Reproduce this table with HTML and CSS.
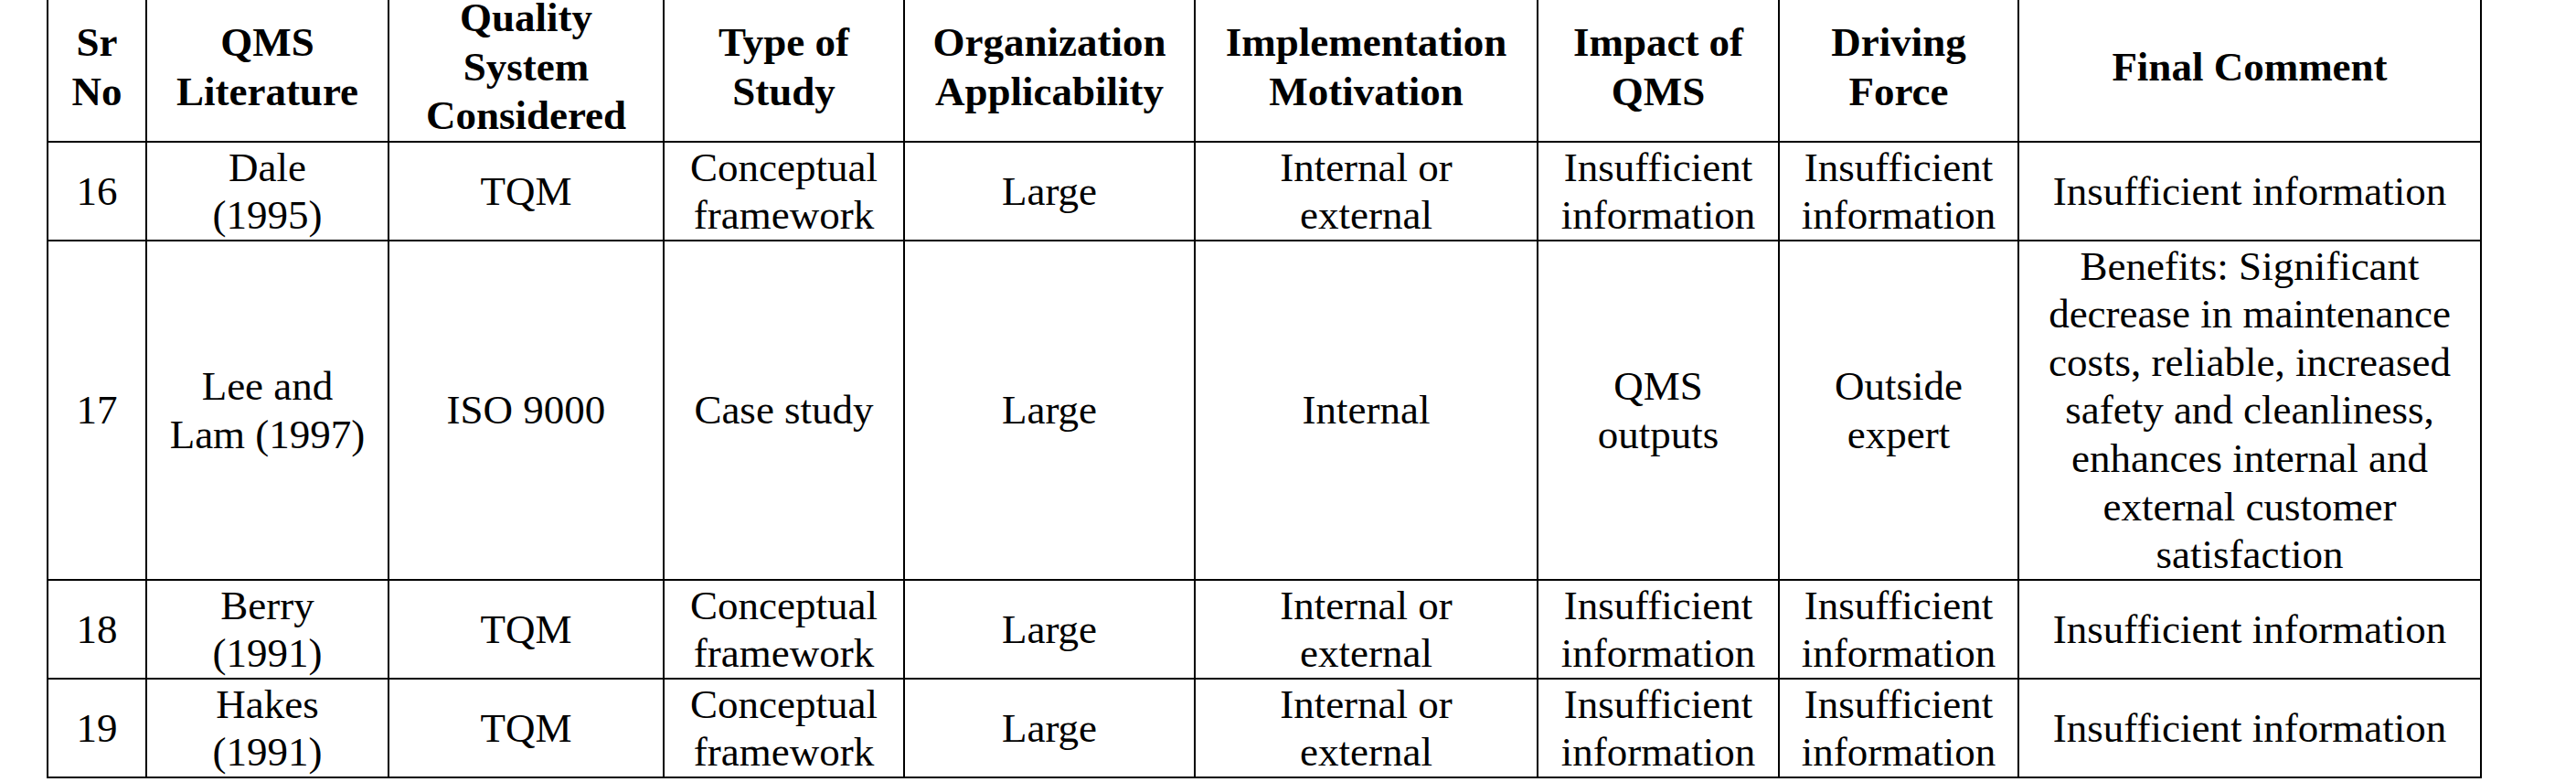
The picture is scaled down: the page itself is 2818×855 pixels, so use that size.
FILE: index.html
```html
<!DOCTYPE html>
<html>
<head>
<meta charset="utf-8">
<link rel="stylesheet" href="styles.css">
</head>
<body>
<table class="qms">
  <colgroup>
    <col class="c-sr"><col class="c-lit"><col class="c-qs"><col class="c-type"><col class="c-org"><col class="c-mot"><col class="c-imp"><col class="c-drv"><col class="c-fin">
  </colgroup>
  <thead>
    <tr>
      <th>Sr<br>No</th>
      <th>QMS<br>Literature</th>
      <th>Quality<br>System<br>Considered</th>
      <th>Type of<br>Study</th>
      <th>Organization<br>Applicability</th>
      <th>Implementation<br>Motivation</th>
      <th>Impact of<br>QMS</th>
      <th>Driving<br>Force</th>
      <th>Final Comment</th>
    </tr>
  </thead>
  <tbody>
    <tr>
      <td>16</td>
      <td>Dale<br>(1995)</td>
      <td>TQM</td>
      <td>Conceptual<br>framework</td>
      <td>Large</td>
      <td>Internal or<br>external</td>
      <td>Insufficient<br>information</td>
      <td>Insufficient<br>information</td>
      <td>Insufficient information</td>
    </tr>
    <tr>
      <td>17</td>
      <td>Lee and<br>Lam (1997)</td>
      <td>ISO 9000</td>
      <td>Case study</td>
      <td>Large</td>
      <td>Internal</td>
      <td>QMS<br>outputs</td>
      <td>Outside<br>expert</td>
      <td>Benefits: Significant<br>decrease in maintenance<br>costs, reliable, increased<br>safety and cleanliness,<br>enhances internal and<br>external customer<br>satisfaction</td>
    </tr>
    <tr>
      <td>18</td>
      <td>Berry<br>(1991)</td>
      <td>TQM</td>
      <td>Conceptual<br>framework</td>
      <td>Large</td>
      <td>Internal or<br>external</td>
      <td>Insufficient<br>information</td>
      <td>Insufficient<br>information</td>
      <td>Insufficient information</td>
    </tr>
    <tr>
      <td>19</td>
      <td>Hakes<br>(1991)</td>
      <td>TQM</td>
      <td>Conceptual<br>framework</td>
      <td>Large</td>
      <td>Internal or<br>external</td>
      <td>Insufficient<br>information</td>
      <td>Insufficient<br>information</td>
      <td>Insufficient information</td>
    </tr>
  </tbody>
</table>
</body>
</html>
```
FILE: styles.css
```css
html, body {
  margin: 0;
  padding: 0;
  background: #ffffff;
}
body {
  overflow: hidden;
}
.qms {
  margin: -9px 0 0 51px;
  width: 2664px;
  table-layout: fixed;
  border-collapse: collapse;
  font-family: "Liberation Serif", "Times New Roman", serif;
  font-size: 45px;
  color: #000000;
}
.qms th,
.qms td {
  border: 2px solid #000000;
  padding: 0.4px 2px;
  text-align: center;
  vertical-align: middle;
  white-space: nowrap;
}
.qms th {
  font-weight: bold;
  line-height: 53.5px;
}
.qms td {
  font-weight: normal;
  line-height: 52.6px;
}
.c-sr { width: 108px; }
.c-lit { width: 265px; }
.c-qs { width: 301px; }
.c-type { width: 263px; }
.c-org { width: 318px; }
.c-mot { width: 375px; }
.c-imp { width: 264px; }
.c-drv { width: 262px; }
.c-fin { width: 506px; }
```
